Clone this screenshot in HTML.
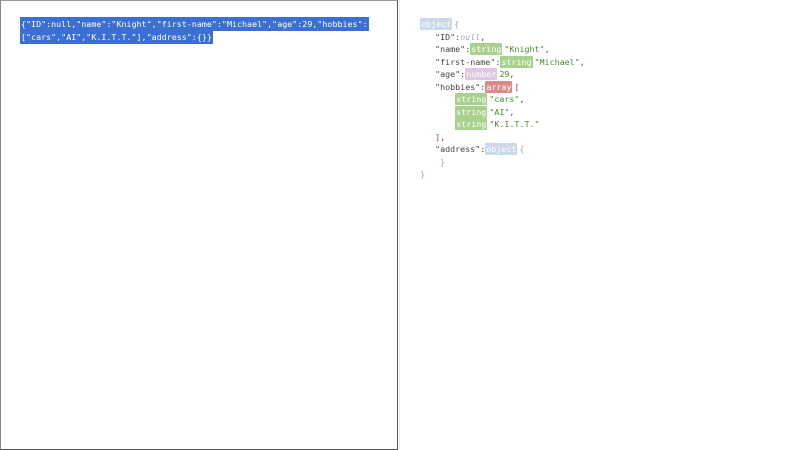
<!DOCTYPE html>
<html><head><style>
body{margin:0;width:800px;height:450px;background:#fff;font-family:"DejaVu Sans Mono","Liberation Mono",monospace;font-size:8.35px;overflow:hidden;position:relative}
.left{position:absolute;left:0;top:0;width:396px;height:448px;border:1px solid #555;border-top-color:#999;border-left-color:#888}
.sel{position:absolute;left:20px;top:18px;line-height:12.5px;color:#fff;}
.sel span{background:#3b6fd1;padding:2px 1px}
.vl{position:absolute;left:399px;top:0;width:1px;height:450px;background:#eee}
.right{position:absolute;left:420px;top:18px;line-height:12.5px;color:#444}
.l{white-space:pre;height:12.5px}
.b{color:#fff;padding:1px 1px;margin:0 2px 0 1px;border-radius:1px}
.l>.b:first-child{margin-left:0}
.o{background:#c9d9ea}.s{background:#a9d18e}.n{background:#dcc8e0}.a{background:#d98a8a}
.br{color:#9ab}.v{color:#4d8a2d}.nu{color:#aaa;font-style:italic}.ar{color:#c33}
</style></head><body>
<div class="left"></div>
<div class="sel"><span>{"ID":null,"name":"Knight","first-name":"Michael","age":29,"hobbies":</span><br><span>["cars","AI","K.I.T.T."],"address":{}}</span></div>
<div class="vl"></div>
<div class="right">
<div class="l"><span class="b o">object</span><span class="br">{</span></div>
<div class="l">   "ID":<span class="nu">null</span>,</div>
<div class="l">   "name":<span class="b s">string</span><span class="v">"Knight"</span>,</div>
<div class="l">   "first-name":<span class="b s">string</span><span class="v">"Michael"</span>,</div>
<div class="l">   "age":<span class="b n">number</span><span class="v">29</span>,</div>
<div class="l">   "hobbies":<span class="b a">array</span><span class="ar">[</span></div>
<div class="l">       <span class="b s">string</span><span class="v">"cars"</span>,</div>
<div class="l">       <span class="b s">string</span><span class="v">"AI"</span>,</div>
<div class="l">       <span class="b s">string</span><span class="v">"K.I.T.T."</span></div>
<div class="l">   <span class="ar">]</span>,</div>
<div class="l">   "address":<span class="b o">object</span><span class="br">{</span></div>
<div class="l">   <span class="br"> }</span></div>
<div class="l"><span class="br">}</span></div>
</div>
</body></html>
